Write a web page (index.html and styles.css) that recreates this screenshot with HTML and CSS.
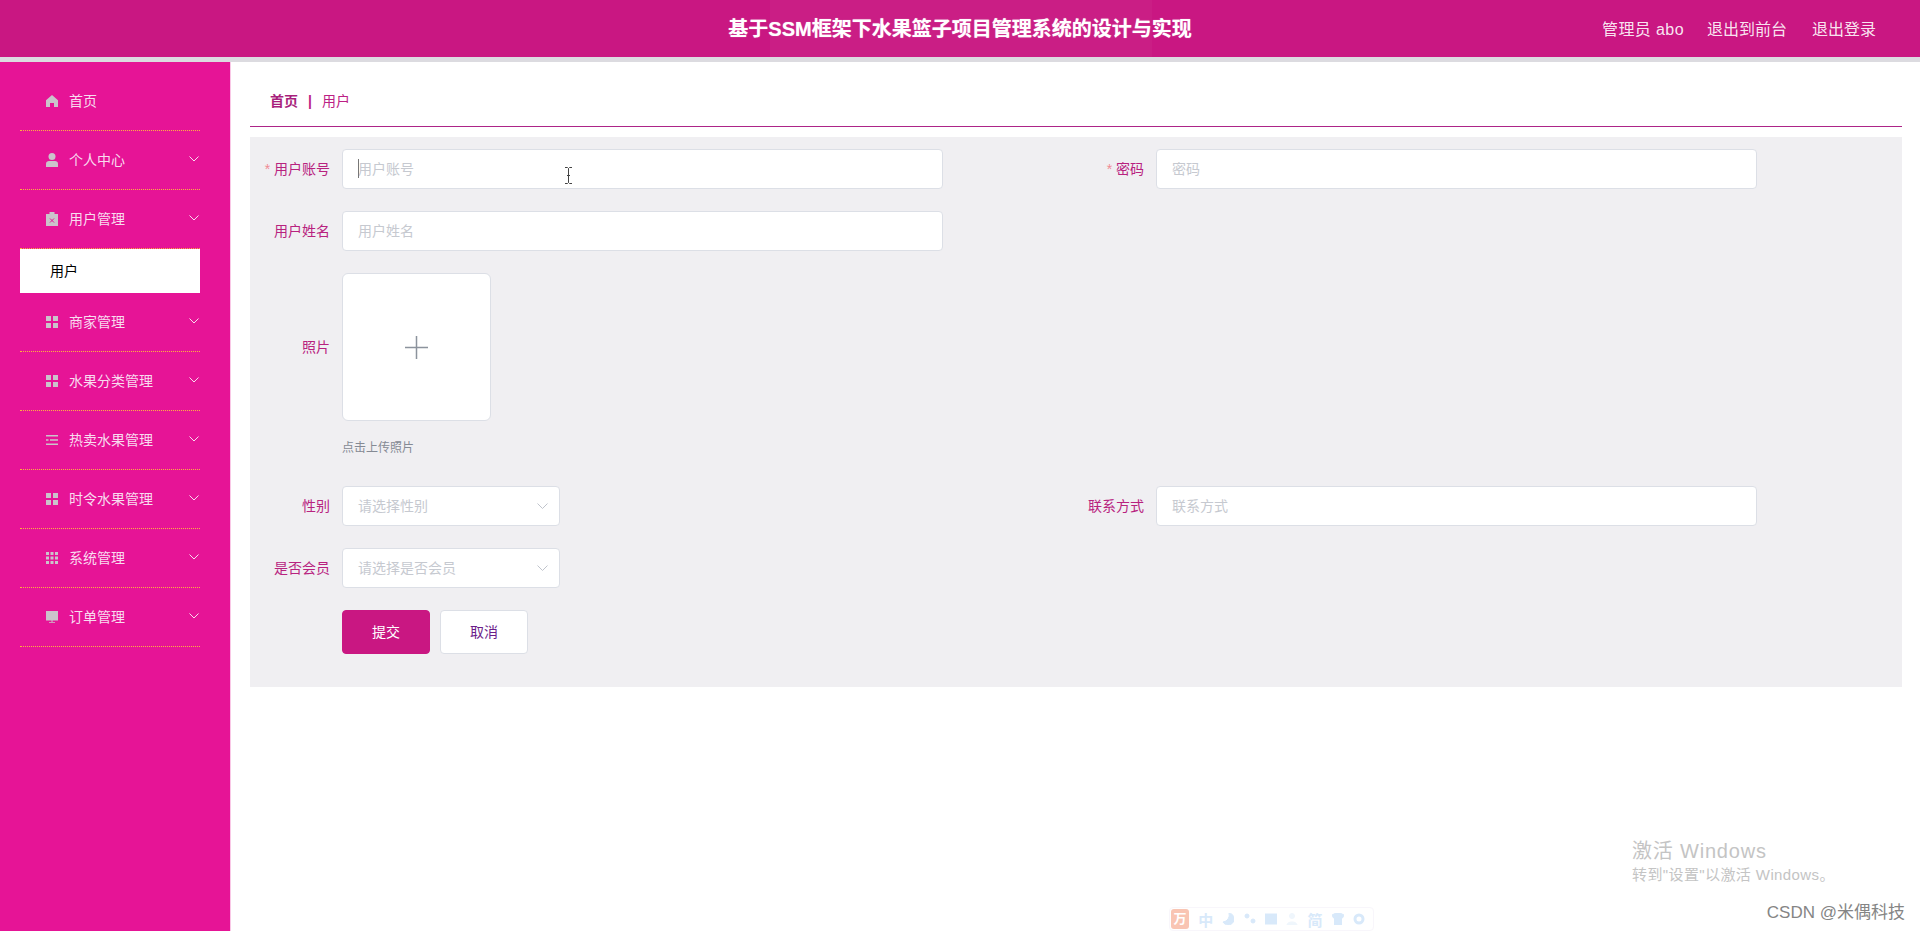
FILE: index.html
```html
<!DOCTYPE html>
<html lang="en">
<head>
  <meta charset="UTF-8" />
  <meta name="viewport" content="width=device-width, initial-scale=1.0"/>
  <title>用户管理</title>
  <link rel="stylesheet" href="styles.css">
</head>
<body>

  <!-- Top bar -->
  <header class="topbar">
    <div class="topbar-ghost"></div>
    <h1 class="topbar-title">基于SSM框架下水果篮子项目管理系统的设计与实现</h1>
    <nav class="topbar-links">
      <span class="topbar-user">管理员 abo</span>
      <a href="#">退出到前台</a>
      <a href="#">退出登录</a>
    </nav>
  </header>

  <div class="main">

    <!-- Side menu -->
    <aside class="sidebar">
      <a class="menu-item" href="#">
        <svg class="menu-icon" viewBox="0 0 12 12"><path d="M6 0 12 5.2V12H8V8H4V12H0V5.2Z"/></svg>
        <span>首页</span>
      </a>
      <a class="menu-item" href="#">
        <svg class="menu-icon menu-icon-tall" viewBox="0 0 12 14"><circle cx="6" cy="3.500" r="3.500"/><path d="M0 14V10.500C0 9 1.500 8 3 8H9C10.500 8 12 9 12 10.500V14Z"/></svg>
        <span>个人中心</span>
        <svg class="menu-arrow" viewBox="0 0 10 6"><path d="M.5.500 5 5 9.500.500"/></svg>
      </a>
      <a class="menu-item" href="#">
        <svg class="menu-icon menu-icon-tall" viewBox="0 0 12 14"><path d="M0 2H3.500V0H8.500V2H12V14H0Z"/><path class="icon-cross" d="M4 6.500 8 10.500M8 6.500 4 10.500"/></svg>
        <span>用户管理</span>
        <svg class="menu-arrow" viewBox="0 0 10 6"><path d="M.5.500 5 5 9.500.500"/></svg>
      </a>
      <a class="submenu-item" href="#">用户</a>
      <a class="menu-item" href="#">
        <svg class="menu-icon" viewBox="0 0 12 12"><path d="M0 0H5V5H0ZM7 0H12V5H7ZM0 7H5V12H0ZM7 7H12V12H7Z"/></svg>
        <span>商家管理</span>
        <svg class="menu-arrow" viewBox="0 0 10 6"><path d="M.5.500 5 5 9.500.500"/></svg>
      </a>
      <a class="menu-item" href="#">
        <svg class="menu-icon" viewBox="0 0 12 12"><path d="M0 0H5V5H0ZM7 0H12V5H7ZM0 7H5V12H0ZM7 7H12V12H7Z"/></svg>
        <span>水果分类管理</span>
        <svg class="menu-arrow" viewBox="0 0 10 6"><path d="M.5.500 5 5 9.500.500"/></svg>
      </a>
      <a class="menu-item" href="#">
        <svg class="menu-icon" viewBox="0 0 12 12"><path d="M0 1H12V2.500H0ZM4 5.200H12V6.800H4ZM0 9.500H12V11H0ZM0 5.200H2.500V6.800H0Z"/></svg>
        <span>热卖水果管理</span>
        <svg class="menu-arrow" viewBox="0 0 10 6"><path d="M.5.500 5 5 9.500.500"/></svg>
      </a>
      <a class="menu-item" href="#">
        <svg class="menu-icon" viewBox="0 0 12 12"><path d="M0 0H5V5H0ZM7 0H12V5H7ZM0 7H5V12H0ZM7 7H12V12H7Z"/></svg>
        <span>时令水果管理</span>
        <svg class="menu-arrow" viewBox="0 0 10 6"><path d="M.5.500 5 5 9.500.500"/></svg>
      </a>
      <a class="menu-item" href="#">
        <svg class="menu-icon" viewBox="0 0 12 12"><path d="M0 0H3V3H0ZM4.500 0H7.500V3H4.500ZM9 0H12V3H9ZM0 4.500H3V7.500H0ZM4.500 4.500H7.500V7.500H4.500ZM9 4.500H12V7.500H9ZM0 9H3V12H0ZM4.500 9H7.500V12H4.500ZM9 9H12V12H9Z"/></svg>
        <span>系统管理</span>
        <svg class="menu-arrow" viewBox="0 0 10 6"><path d="M.5.500 5 5 9.500.500"/></svg>
      </a>
      <a class="menu-item" href="#">
        <svg class="menu-icon" viewBox="0 0 12 12"><path d="M0 0H12V9.500H0ZM5.500 9.500H6.500V11H9V11.800H3V11H5.500Z"/></svg>
        <span>订单管理</span>
        <svg class="menu-arrow" viewBox="0 0 10 6"><path d="M.5.500 5 5 9.500.500"/></svg>
      </a>
    </aside>

    <!-- Content -->
    <main class="content">
      <div class="breadcrumb">
        <b>首页</b>
        <i>|</i>
        <span>用户</span>
      </div>

      <form class="form-panel">
        <div class="form-row">
          <div class="field">
            <label class="field-label"><em>*</em> 用户账号</label>
            <div class="input-wrap">
              <input class="input" type="text" placeholder="用户账号">
              <span class="text-caret"></span>
              <svg class="mouse-cursor" viewBox="0 0 9 17"><path d="M1 .5H3.500L4.500 1.500 5.500.500H8M4.500 1.500V15.500M1 16.500H3.500L4.500 15.500 5.500 16.500H8M3 8.500H6"/></svg>
            </div>
          </div>
          <div class="field">
            <label class="field-label"><em>*</em> 密码</label>
            <input class="input" type="text" placeholder="密码">
          </div>
        </div>

        <div class="form-row">
          <div class="field">
            <label class="field-label">用户姓名</label>
            <input class="input" type="text" placeholder="用户姓名">
          </div>
        </div>

        <div class="form-row form-row-tall">
          <div class="field">
            <label class="field-label">照片</label>
            <div class="upload-box">
              <svg class="upload-plus" viewBox="0 0 23 23"><path d="M11.500 0V23M0 11.500H23"/></svg>
            </div>
          </div>
        </div>
        <p class="upload-tip">点击上传照片</p>

        <div class="form-row">
          <div class="field">
            <label class="field-label">性别</label>
            <div class="select">
              <span>请选择性别</span>
              <svg class="select-arrow" viewBox="0 0 11 6"><path d="M.5.500 5.500 5.500 10.500.500"/></svg>
            </div>
          </div>
          <div class="field">
            <label class="field-label">联系方式</label>
            <input class="input" type="text" placeholder="联系方式">
          </div>
        </div>

        <div class="form-row">
          <div class="field">
            <label class="field-label">是否会员</label>
            <div class="select">
              <span>请选择是否会员</span>
              <svg class="select-arrow" viewBox="0 0 11 6"><path d="M.5.500 5.500 5.500 10.500.500"/></svg>
            </div>
          </div>
        </div>

        <div class="form-actions">
          <button class="btn btn-primary" type="button">提交</button>
          <button class="btn btn-plain" type="button">取消</button>
        </div>
      </form>
    </main>
  </div>

  <!-- Things the desktop drew over the page -->
  <div class="activate">
    <div class="activate-title">激活 Windows</div>
    <div class="activate-sub">转到"设置"以激活 Windows。</div>
  </div>
  <div class="ime-bar">
    <span class="ime-logo">万</span>
    <span>中</span>
    <svg viewBox="0 0 12 12"><path d="M7 0A6 6 0 1 1 1 9 7 7 0 0 0 7 0Z"/></svg>
    <svg viewBox="0 0 12 12"><circle cx="3" cy="3" r="2"/><circle cx="9" cy="8" r="2"/></svg>
    <svg viewBox="0 0 12 12"><path d="M0 1H12V11H0Z"/></svg>
    <svg viewBox="0 0 12 12"><circle cx="6" cy="3" r="2.500" opacity=".4"/><path d="M1 12C1 8 11 8 11 12Z" opacity=".4"/></svg>
    <span>简</span>
    <svg viewBox="0 0 12 12"><path d="M0 2 4 0H8L12 2 10.500 5H9.500V12H2.500V5H1.500Z"/></svg>
    <svg viewBox="0 0 12 12"><circle cx="6" cy="6" r="4" fill="none" stroke-width="3"/></svg>
  </div>
  <div class="csdn-mark">CSDN @米偶科技</div>

</body>
</html>
```

FILE: styles.css
```css
html, body {
  margin: 0;
  padding: 0;
  height: 100%;
  overflow: hidden;
  font-family: "Liberation Sans", "Noto Sans CJK SC", sans-serif;
  font-size: 14px;
  background-color: #fff;
}

/* Top bar */
.topbar {
  position: relative;
  height: 57px;
  border-bottom: 5px solid #dcdbe0;
  background-color: #c91782;
  display: flex;
  align-items: center;
  justify-content: center;
  color: #fff;
}

.topbar-ghost {
  position: absolute;
  top: 0;
  left: 770px;
  width: 382px;
  height: 57px;
  background-color: rgba(255, 255, 255, 0.03);
}

.topbar-title {
  position: relative;
  margin: 2px 0 0;
  font-size: 20px;
  font-weight: bold;
  line-height: 55px;
  text-shadow: 0 0 1px rgba(255, 255, 255, 0.6);
}

.topbar-links {
  position: absolute;
  top: 0;
  right: 44px;
  height: 56px;
  display: flex;
  align-items: center;
  gap: 25px;
  font-size: 16px;
  color: rgba(255, 255, 255, 0.9);
}

.topbar-links a {
  color: inherit;
  text-decoration: none;
}

.topbar-user {
  letter-spacing: 0.4px;
  margin-right: -2px;
}

.main {
  display: flex;
  height: 869px;
}

/* Side menu */
.sidebar {
  width: 230px;
  flex: none;
  padding: 10px 0 0;
  background-color: #e61496;
  border-right: 1px solid #f9c8e6;
}

.menu-item {
  display: flex;
  align-items: center;
  height: 58px;
  margin: 0 30px 0 20px;
  padding-left: 26px;
  border-bottom: 1px dotted #ffb13d;
  color: #f8dcef;
  text-decoration: none;
}

.menu-item span {
  margin-top: -2px;
}

.menu-icon {
  width: 12px;
  height: 12px;
  margin-right: 11px;
  fill: #cbc3cb;
  flex: none;
}

.menu-icon-tall {
  height: 14px;
}

.icon-cross {
  fill: none;
  stroke: #e61496;
  stroke-width: 1;
}

.menu-arrow {
  width: 10px;
  height: 6px;
  margin-left: auto;
  margin-right: 1px;
  margin-top: -2px;
  fill: none;
  stroke: #f8dcef;
  stroke-width: 1;
}

.submenu-item {
  display: block;
  height: 44px;
  line-height: 44px;
  margin: 0 30px 0 20px;
  padding-left: 30px;
  background-color: #fff;
  color: #000;
  text-decoration: none;
}

/* Content */
.content {
  flex: 1;
  padding: 0 18px 0 19px;
}

.breadcrumb {
  height: 65px;
  line-height: 78px;
  box-sizing: border-box;
  padding-left: 20px;
  border-bottom: 1px solid #ad2488;
  color: #bc2085;
  display: flex;
  gap: 10px;
}

.breadcrumb b {
  font-weight: bold;
  color: #a81f7c;
}

.breadcrumb i {
  font-style: normal;
  font-weight: bold;
}

.form-panel {
  margin-top: 10px;
  height: 550px;
  box-sizing: border-box;
  padding-top: 12px;
  background-color: #f0eff2;
}

.form-row {
  display: flex;
  height: 40px;
  margin-bottom: 22px;
}

.form-row-tall {
  height: 148px;
  margin-bottom: 19px;
}

.field {
  width: 814px;
  display: flex;
  align-items: center;
}

.field-label {
  width: 80px;
  margin-right: 12px;
  margin-top: -2px;
  text-align: right;
  color: #b8227f;
  white-space: nowrap;
}

.field-label em {
  font-style: normal;
  color: #f08a94;
}

.input-wrap {
  position: relative;
  width: 601px;
  height: 40px;
}

.input {
  width: 601px;
  height: 40px;
  box-sizing: border-box;
  padding: 0 15px;
  border: 1px solid #dcdfe6;
  border-radius: 4px;
  background-color: #fff;
  font-family: inherit;
  font-size: 14px;
  outline: none;
}

.input::placeholder {
  color: #c6c9d0;
}

.text-caret {
  position: absolute;
  top: 10px;
  left: 16px;
  width: 1px;
  height: 19px;
  background-color: #777;
}

.mouse-cursor {
  position: absolute;
  top: 18px;
  left: 222px;
  width: 9px;
  height: 17px;
  fill: none;
  stroke: #444;
  stroke-width: 1;
}

.upload-box {
  width: 149px;
  height: 148px;
  box-sizing: border-box;
  border: 1px solid #dcdfe6;
  border-radius: 6px;
  background-color: #fff;
  display: flex;
  align-items: center;
  justify-content: center;
}

.upload-plus {
  width: 23px;
  height: 23px;
  fill: none;
  stroke: #8c939d;
  stroke-width: 1.5;
}

.upload-tip {
  margin: 0 0 30px 92px;
  font-size: 12px;
  line-height: 16px;
  color: #858a94;
}

.select {
  width: 218px;
  height: 40px;
  box-sizing: border-box;
  padding: 0 11px 0 15px;
  border: 1px solid #dcdfe6;
  border-radius: 4px;
  background-color: #fff;
  color: #c6c9d0;
  display: flex;
  align-items: center;
  justify-content: space-between;
}

.select span {
  margin-top: -2px;
}

.select-arrow {
  width: 11px;
  height: 6px;
  fill: none;
  stroke: #c0c4cc;
  stroke-width: 1;
}

.form-actions {
  margin-left: 92px;
  display: flex;
  gap: 10px;
}

.btn {
  width: 88px;
  height: 44px;
  padding: 0 0 2px;
  border-radius: 4px;
  font-family: inherit;
  font-size: 14px;
  cursor: pointer;
}

.btn-primary {
  border: 1px solid #c91782;
  background-color: #c91782;
  color: #fff;
}

.btn-plain {
  border: 1px solid #dcdfe6;
  background-color: #fff;
  color: #6b1d8a;
}

/* Overlays from the desktop */
.activate {
  position: absolute;
  left: 1632px;
  top: 837px;
  color: #c4c4c4;
}

.activate-title {
  font-size: 20px;
  line-height: 28px;
  letter-spacing: 0.8px;
}

.activate-sub {
  font-size: 15px;
  line-height: 20px;
  letter-spacing: 0.4px;
}

.ime-bar {
  position: absolute;
  left: 1169px;
  top: 907px;
  width: 205px;
  height: 24px;
  box-sizing: border-box;
  padding: 0 8px 0 1px;
  display: flex;
  align-items: center;
  justify-content: space-between;
  border: 1px solid #f8f6fb;
  border-radius: 4px;
  font-size: 15px;
  font-weight: bold;
  color: #d8e9fa;
}

.ime-bar svg {
  width: 12px;
  height: 12px;
  fill: #d8e9fa;
  stroke: #d8e9fa;
}

.ime-logo {
  width: 18px;
  height: 20px;
  border-radius: 3px;
  background-color: #f9c5b3;
  color: #fff;
  font-size: 13px;
  line-height: 20px;
  text-align: center;
}

.csdn-mark {
  position: absolute;
  right: 15px;
  top: 902px;
  font-size: 17px;
  line-height: 22px;
  color: #858585;
}
```
